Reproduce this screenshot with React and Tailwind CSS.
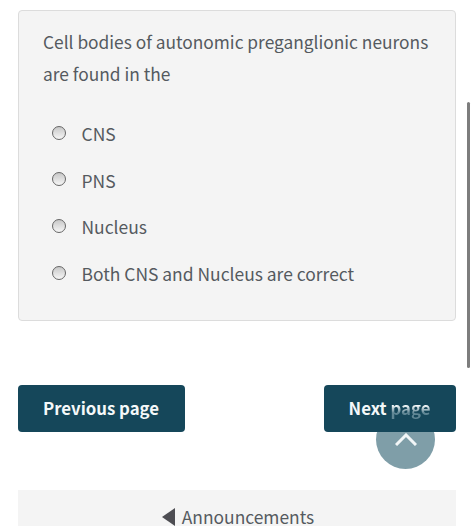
const font = { fontFamily: '"Noto Sans CJK SC", "Noto Sans", sans-serif' };

function Option({ label }) {
  return (
    <label className="flex items-center h-[46.6px] pl-[8.5px]">
      <span className="w-[14px] h-[14px] mb-[3px] rounded-full border border-[#666] bg-gradient-to-b from-[#c8c8c8] to-[#f6f6f6] shrink-0" />
      <span className="ml-[16px] text-[17.45px] text-[#555a5f]">{label}</span>
    </label>
  );
}

export default function App() {
  return (
    <div className="relative w-[474px] h-[526px] overflow-hidden bg-white" style={font}>
      <div className="pl-[17.5px] pr-[18.5px] pt-[10px]">
        <div className="h-[311px] rounded-[4px] border border-[#dcdcdc] bg-[#f4f4f4] pl-[24.5px] pt-[15px]">
          <p className="text-[17.33px] leading-[32px] text-[#555a5f] w-[400px]">
            Cell bodies of autonomic preganglionic neurons are found in the
          </p>
          <div className="mt-[21px]">
            <Option label="CNS" />
            <Option label="PNS" />
            <Option label="Nucleus" />
            <Option label="Both CNS and Nucleus are correct" />
          </div>
        </div>
        <div className="flex justify-between mt-[64px]">
          <button className="relative w-[167px] h-[47px] rounded-[4px] bg-[#15475a] text-[#f4f8f9] text-[16.8px] font-semibold">
            Previous page
          </button>
          <button className="relative z-10 w-[132px] h-[47px] rounded-[4px] bg-[#15475a] text-[#f4f8f9] text-[16.8px] font-semibold">
            Next <span className="bg-gradient-to-b from-[#f4f8f9] from-40% to-[#5f8694] to-70% bg-clip-text text-transparent">page</span>
          </button>
        </div>
        <div className="mt-[58px] h-[60px] bg-[#f4f4f4] flex justify-center pt-[13px]">
          <div className="flex items-center h-[28px] gap-[7px] ml-[3px] text-[17.4px] text-[#555a5f]">
            <svg width="13" height="18" viewBox="0 0 13 18"><path d="M13 0V18L0 9Z" fill="#4d4d52" /></svg>
            Announcements
          </div>
        </div>
      </div>
      <div className="absolute left-[467px] top-[102px] w-[3px] h-[266px] rounded-full bg-[#7d7d7d]" />
      <div className="absolute left-[376px] top-[409.5px] w-[59px] h-[59px] rounded-full bg-[#7f9ea8] flex justify-center">
        <svg className="mt-[23px]" width="22" height="13" viewBox="0 0 22 13" fill="none"><path d="M1 12L11 2L21 12" stroke="#f2f6f7" strokeWidth="3" /></svg>
      </div>
    </div>
  );
}
